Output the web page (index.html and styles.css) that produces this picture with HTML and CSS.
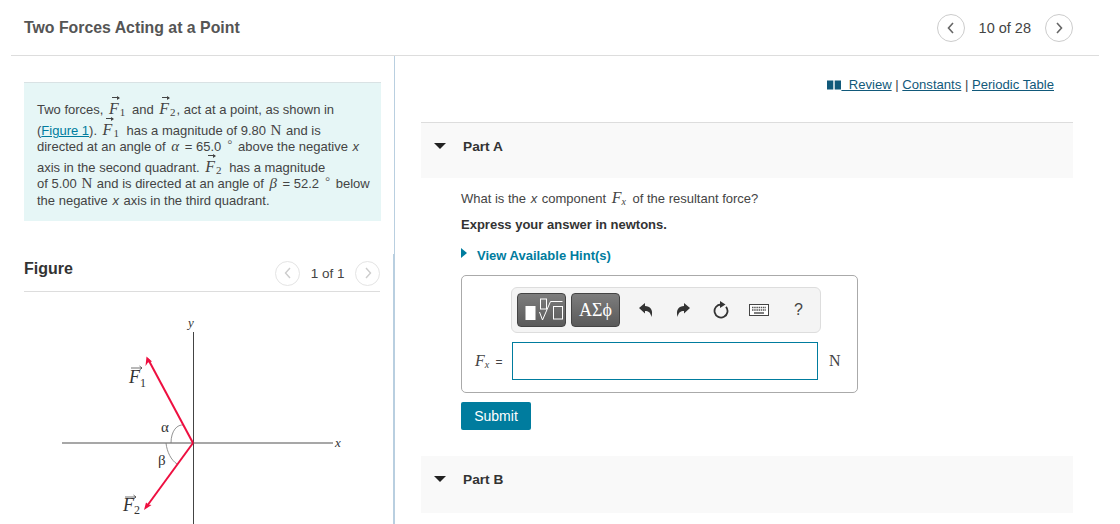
FILE: index.html
```html
<!DOCTYPE html>
<html lang="en">
<head>
<meta charset="utf-8">
<title>Two Forces Acting at a Point</title>
<link rel="stylesheet" href="styles.css">
</head>
<body>
<header class="top">
  <h1 class="title">Two Forces Acting at a Point</h1>
  <nav class="pager">
    <span class="circle"><svg width="12" height="14" viewBox="0 0 12 14"><path d="M8 2 3.500 7 8 12" class="chev"/></svg></span>
    <span class="count">10 of 28</span>
    <span class="circle"><svg width="12" height="14" viewBox="0 0 12 14"><path d="M4 2 8.500 7 4 12" class="chev"/></svg></span>
  </nav>
</header>
<main class="columns">
  <section class="left">
    <div class="left-top">
      <div class="statement">
        <div class="ln ln-a">Two forces, <span class="vec">F<i class="arrow"></i></span><sub class="sb sb-tight">1</sub> and <span class="vec">F<i class="arrow"></i></span><sub class="sb sb-comma">2</sub>, act at a point, as shown in</div>
        <div class="ln ln-b">(<a class="link" href="#">Figure 1</a>). <span class="vec">F<i class="arrow"></i></span><sub class="sb">1</sub> has a magnitude of 9.80 <span class="rm">N</span> and is</div>
        <div class="ln ln-c">directed at an angle of <span class="mi">α</span> = 65.0 <sup class="deg">∘</sup> above the negative <em>x</em></div>
        <div class="ln ln-b">axis in the second quadrant. <span class="vec">F<i class="arrow"></i></span><sub class="sb">2</sub> has a magnitude</div>
        <div class="ln ln-c">of 5.00 <span class="rm">N</span> and is directed at an angle of <span class="mi">β</span> = 52.2 <sup class="deg">∘</sup> below</div>
        <div class="ln ln-d">the negative <em>x</em> axis in the third quadrant.</div>
      </div>
    </div>
    <div class="figure-sec">
      <div class="figure-head">
        <h2 class="figure-title">Figure</h2>
        <div class="mini-pager">
          <span class="circle circle-dim"><svg width="12" height="14" viewBox="0 0 12 14"><path d="M8 2 3.500 7 8 12" class="chev-dim"/></svg></span>
          <span class="mini-count">1 of 1</span>
          <span class="circle circle-dim"><svg width="12" height="14" viewBox="0 0 12 14"><path d="M4 2 8.500 7 4 12" class="chev-dim"/></svg></span>
        </div>
      </div>
      <svg class="diagram" width="370" height="232" viewBox="0 292 370 232">
        <line x1="62" y1="443" x2="333" y2="443" stroke="#8a8a8a" stroke-width="1.300"/>
        <line x1="193.500" y1="332" x2="193.500" y2="524" stroke="#444" stroke-width="1"/>
        <path d="M171 443C171 431 177 424 184 425" fill="none" stroke="#777" stroke-width=".8"/>
        <path d="M166 443C167 452 171 460 177 464" fill="none" stroke="#777" stroke-width=".8"/>
        <path d="M193 443 148 359" stroke="#ee0f40" stroke-width="2" fill="none"/>
        <path d="M146.500 356.500 152 361.500 148 362.500 145.500 366z" fill="#ee0f40"/>
        <path d="M193 443 147 506" stroke="#ee0f40" stroke-width="2" fill="none"/>
        <path d="M144 510 146 502.500 148.500 504.500 151.500 505z" fill="#ee0f40"/>
        <text x="188" y="327" class="t ti">y</text>
        <text x="335" y="447" class="t ti">x</text>
        <text x="161" y="432" class="t tg">α</text>
        <text x="158" y="465" class="t tg">β</text>
        <text x="129" y="383" class="t ti tf">F</text>
        <text x="140" y="387" class="t ts">1</text>
        <path d="M131 368H142M139.500 366 142 368 139.500 370" fill="none" stroke="#333" stroke-width=".7"/>
        <text x="123" y="511" class="t ti tf">F</text>
        <text x="134" y="514" class="t ts">2</text>
        <path d="M125 497H136M133.500 495 136 497 133.500 499" fill="none" stroke="#333" stroke-width=".7"/>
      </svg>
    </div>
  </section>
  <section class="right">
    <div class="links">
      <a class="rlink" href="#"><svg class="book" width="14" height="10" viewBox="0 0 14 10"><path d="M0 .5h6.300v9H0zM7.700 .5H14v9H7.700z" fill="#11597a"/></svg> &nbsp;Review</a> <span class="bar">|</span> <a class="rlink" href="#">Constants</a> <span class="bar">|</span> <a class="rlink" href="#">Periodic Table</a>
    </div>
    <div class="part part-a"><span class="tri-down"></span><span class="part-name">Part A</span></div>
    <div class="part-body">
      <p class="q">What is the <em>x</em> component <span class="vec2">F</span><sub class="sbi">x</sub> of the resultant force?</p>
      <p class="express">Express your answer in newtons.</p>
      <a class="hint" href="#"><span class="tri-right"></span>View Available Hint(s)</a>
      <div class="answer">
        <div class="toolbar">
          <span class="tool-btn tool-btn-a"><svg width="44" height="26" viewBox="0 0 44 26"><rect x="5.500" y="9" width="10" height="14" fill="#fff"/><rect x="20.500" y="2" width="6" height="10" fill="none" stroke="#fff"/><path d="M19.500 15l3 8 8-18.500h12" fill="none" stroke="#fff"/><rect x="33.500" y="9.500" width="9" height="12.500" fill="none" stroke="#fff"/></svg></span>
          <span class="tool-btn tool-btn-b">ΑΣϕ</span>
          <span class="tools">
            <svg width="16" height="16" viewBox="0 0 16 16"><path d="M1 6 7 1V4C12 4 15.500 7.500 13.500 15 12.500 10.500 10.500 9 7 9V11.500z" fill="#333"/></svg>
            <svg width="16" height="16" viewBox="0 0 16 16"><path d="M15 6 9 1V4C4 4 .5 7.500 2.500 15 3.500 10.500 5.500 9 9 9V11.500z" fill="#333"/></svg>
            <svg width="18" height="18" viewBox="0 0 18 18"><path d="M9 3.500A6.500 6.500 0 1 0 14 5.800" fill="none" stroke="#333" stroke-width="1.800"/><path d="M8 0 13.500 3.500 8 7z" fill="#333"/></svg>
            <svg class="kb" width="20" height="14" viewBox="0 0 20 14"><rect x=".5" y="1.500" width="19" height="11" fill="#fff" stroke="#444"/><path d="M3 4.500h14M3 7h14" stroke="#555" stroke-width="1.500" stroke-dasharray="1.500 .7"/><path d="M5 10h10" stroke="#555" stroke-width="1.500"/></svg>
            <span class="help">?</span>
          </span>
        </div>
        <div class="entry">
          <span class="entry-label"><span class="vec2">F</span><sub class="sbi">x</sub> =</span>
          <span class="entry-input"></span>
          <span class="rm unit">N</span>
        </div>
      </div>
      <button class="submit" type="button">Submit</button>
    </div>
    <div class="part part-b"><span class="tri-down"></span><span class="part-name">Part B</span></div>
  </section>
</main>
</body>
</html>
```
FILE: styles.css
```css
html, body { margin: 0; padding: 0; }
body {
  width: 1120px;
  height: 524px;
  overflow: hidden;
  background: #fff;
  color: #444;
  font-family: "Liberation Sans", Arial, sans-serif;
  font-size: 13px;
}
.top {
  margin: 0 21px 0 11px;
  height: 55px;
  padding: 0 26px 0 13px;
  display: flex;
  align-items: center;
  justify-content: space-between;
  border-bottom: 1px solid #ddd;
}
.title { margin: 0; font-size: 15.850px; font-weight: bold; color: #555; }
.pager { display: flex; align-items: center; gap: 14px; }
.count { font-size: 14.500px; color: #444; }
.circle {
  width: 26px;
  height: 26px;
  border: 1px solid #ccc;
  border-radius: 50%;
  display: flex;
  align-items: center;
  justify-content: center;
  background: #fff;
}
.circle-dim { width: 23px; height: 23px; border-color: #e4e4e4; }
.chev { fill: none; stroke: #666; stroke-width: 1.600; }
.chev-dim { fill: none; stroke: #ccc; stroke-width: 1.400; }

.columns { display: flex; height: 468px; }
.left { width: 384px; margin-left: 11px; display: flex; flex-direction: column; }
.left-top { padding: 26px 0 0 13px; height: 172px; border-right: 1px solid #b9cfe0; }
.statement {
  width: 357px;
  height: 139px;
  box-sizing: border-box;
  padding: 16px 0 0 13px;
  background: #e6f6f6;
  border-top: 1px solid #d9e2e4;
}
.ln { white-space: nowrap; color: #444; }
.ln em { margin: 0 1px; }
.ln-a { height: 21px; line-height: 21px; }
.ln-b { height: 21px; line-height: 21px; }
.ln-c { height: 16px; line-height: 11px; }
.ln-d { height: 16px; line-height: 14px; }
.vec { position: relative; display: inline-block; margin-left: 2px; font: italic 16px "Liberation Serif", serif; line-height: 1; padding-right: 1px; }
.arrow { position: absolute; left: 3px; top: -4px; width: 7px; height: 1px; background: #444; }
.arrow::after { content: ""; position: absolute; right: -1px; top: -1.500px; border-left: 3px solid #444; border-top: 2px solid transparent; border-bottom: 2px solid transparent; }
.sb { font: 11px "Liberation Serif", serif; vertical-align: -2px; line-height: 0; margin-right: 4px; }
.sb-tight { margin-right: 3px; }
.sb-comma { margin-right: 1px; }
.rm { font-family: "Liberation Serif", serif; font-size: 15px; margin: 0 1px; }
.mi { font-family: "Liberation Serif", serif; font-style: italic; font-size: 15px; margin: 0 2px; }
.deg { font: 12px "DejaVu Sans", sans-serif; vertical-align: 5px; line-height: 0; margin: 0 1px; color: #666; }
.link { color: #007c9e; text-decoration: underline; }

.figure-sec { flex: 1; border-right: 2px solid #b9cfe0; padding-left: 13px; min-height: 0; overflow: hidden; }
.figure-head {
  width: 356px;
  height: 37px;
  display: flex;
  align-items: center;
  justify-content: space-between;
  border-bottom: 1px solid #ddd;
}
.figure-title { margin: 0 0 8px; font-size: 16px; font-weight: bold; color: #333; }
.mini-pager { display: flex; align-items: center; gap: 10.500px; margin-top: 1px; }
.mini-count { font-size: 13.500px; color: #444; }
.diagram { display: block; margin-left: -24px; }
.t { font: 13px "Liberation Serif", serif; fill: #333; }
.ti { font-style: italic; }
.tf { font-size: 18px; }
.ts { font-size: 12px; }
.tg { font-size: 15px; }

.right { width: 652px; margin-left: 26px; }
.links { height: 66px; padding: 21px 19px 0 0; box-sizing: border-box; text-align: right; font-size: 13.100px; line-height: 16px; white-space: nowrap; }
.rlink { color: #11597a; text-decoration: underline; }
.bar { color: #444; }
.book { vertical-align: -1px; }
.part {
  display: flex;
  align-items: flex-start;
  background: #f9f9f9;
}
.part-a { height: 56px; border-top: 1px solid #ddd; padding-top: 16px; box-sizing: border-box; }
.part-b { height: 57px; padding-top: 16px; box-sizing: border-box; }
.tri-down { margin: 4px 0 0 13px; border-top: 6px solid #222; border-left: 6px solid transparent; border-right: 6px solid transparent; }
.part-name { margin-left: 17px; font-size: 13.700px; font-weight: bold; color: #333; line-height: 16px; }
.part-body { height: 278px; padding-left: 40px; box-sizing: border-box; padding-top: 11px; }
.q, .express { margin: 0; font-size: 13px; line-height: 16px; color: #444; white-space: nowrap; }
.q em { margin: 0 1px; }
.express { margin-top: 10px; font-weight: bold; color: #333; }
.vec2 { font: italic 16px "Liberation Serif", serif; margin-left: 2px; }
.sbi { font: italic 10px "Liberation Serif", serif; vertical-align: -2px; line-height: 0; margin-right: 3px; }
.hint { display: flex; align-items: center; margin-top: 14px; height: 16px; font-size: 13px; font-weight: bold; color: #007c9e; text-decoration: none; }
.tri-right { margin: -4px 10px 0 0; border-left: 6px solid #007c9e; border-top: 5px solid transparent; border-bottom: 5px solid transparent; }
.answer {
  width: 397px;
  height: 118px;
  margin-top: 12px;
  box-sizing: border-box;
  border: 1px solid #aaa;
  border-radius: 5px;
  padding: 11px 0 0 49px;
}
.toolbar {
  width: 310px;
  height: 46px;
  box-sizing: border-box;
  display: flex;
  align-items: center;
  gap: 5px;
  padding-left: 5px;
  background: #f4f4f4;
  border: 1px solid #ddd;
  border-radius: 6px;
}
.tool-btn {
  height: 34px;
  width: 49px;
  box-sizing: border-box;
  border: 1px solid #444;
  border-radius: 4px;
  background: linear-gradient(#7d7d7d, #5a5a5a);
  color: #fff;
  display: flex;
  align-items: center;
  justify-content: center;
  font: 18px "Liberation Serif", serif;
}
.tools { display: flex; align-items: center; gap: 21px; margin-left: 13px; }
.kb { margin-left: -2px; }
.help { font-size: 16px; color: #444; margin-left: 4px; }
.entry { display: flex; align-items: center; margin-top: 9px; margin-left: -38px; }
.entry-label { width: 39px; font-size: 12px; white-space: nowrap; }
.entry-input { width: 306px; height: 38px; box-sizing: border-box; border: 1px solid #007c9e; background: #fff; }
.unit { margin-left: 11px; font-size: 16px; }
.submit {
  display: block;
  width: 70px;
  height: 28px;
  margin-top: 9px;
  padding: 0;
  border: 0;
  border-radius: 2px;
  background: #007c9e;
  color: #fff;
  font: 14px "Liberation Sans", Arial, sans-serif;
}
```
